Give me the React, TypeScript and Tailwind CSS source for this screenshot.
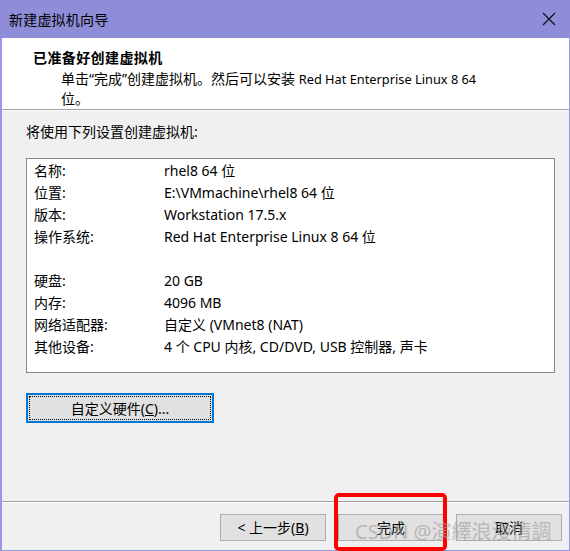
const font = "font-['Noto_Sans','Noto_Sans_CJK_SC',sans-serif]";

const rows: [string, string][] = [
  ["名称:", "rhel8 64 位"],
  ["位置:", "E:\\VMmachine\\rhel8 64 位"],
  ["版本:", "Workstation 17.5.x"],
  ["操作系统:", "Red Hat Enterprise Linux 8 64 位"],
];

const rows2: [string, string][] = [
  ["硬盘:", "20 GB"],
  ["内存:", "4096 MB"],
  ["网络适配器:", "自定义 (VMnet8 (NAT)"],
  ["其他设备:", "4 个 CPU 内核, CD/DVD, USB 控制器, 声卡"],
];

function Row({ label, value }: { label: string; value: string }) {
  return (
    <div className="flex h-[22px] items-center">
      <span className="w-[130px]">{label}</span>
      <span>{value}</span>
    </div>
  );
}

function Btn({ children, className = "" }: { children: React.ReactNode; className?: string }) {
  return (
    <div
      className={
        "flex h-[27px] w-[106px] items-center justify-center border border-[#adadad] bg-[#e1e1e1] text-[14px] text-black " +
        className
      }
    >
      {children}
    </div>
  );
}

export default function App() {
  return (
    <div className={`relative flex h-[551px] w-[570px] flex-col bg-[#f0f0f0] text-[14px] text-black ${font}`}>
      {/* title bar */}
      <div className="flex h-[38px] shrink-0 items-center justify-between bg-[#8f8cd8] pl-[9px] pr-[14px]">
        <span className="text-[14px] tracking-[0.2px]">新建虚拟机向导</span>
        <svg width="14" height="14" viewBox="0 0 14 14">
          <path d="M1 1L13 13M13 1L1 13" stroke="#111" strokeWidth="1.2" />
        </svg>
      </div>

      <div className="flex flex-1 flex-col border-b border-l-2 border-r border-[#9a97e4]">
        {/* header */}
        <div className="h-[72px] shrink-0 border-b border-[#a0a0a0] bg-white pl-[31px] pt-[10px]">
          <div className="text-[14px] font-bold leading-[20px] tracking-[0.4px]">已准备好创建虚拟机</div>
          <div className="mt-[1px] w-[452px] pl-[28px] leading-[19px]">
            单击“完成”创建虚拟机。然后可以安装 <span className="text-[12.8px]">Red Hat Enterprise Linux 8 64</span> 位。
          </div>
        </div>
        <div className="h-px bg-white" />

        {/* body */}
        <div className="flex flex-1 flex-col pl-[24px] pr-[14px]">
          <div className="mt-[12px] leading-[18px]">将使用下列设置创建虚拟机:</div>
          <div className="mt-[17px] h-[215px] border border-[#828790] bg-white pl-[7px]">
            {rows.map(([l, v]) => (
              <Row key={l} label={l} value={v} />
            ))}
            <div className="h-[22px]" />
            {rows2.map(([l, v]) => (
              <Row key={l} label={l} value={v} />
            ))}
          </div>
          <div className="mt-[20px] flex h-[30px] w-[188px] items-center justify-center border-2 border-[#0078d7] bg-[#e1e1e1] outline-1 outline-dotted outline-black -outline-offset-4">
            自定义硬件(<span className="underline">C</span>)...
          </div>
        </div>

        {/* footer */}
        <div className="h-[2px] shrink-0 border-t border-[#a0a0a0] bg-white" />
        <div className="flex h-[47px] shrink-0 items-start gap-[12px] pl-[218px] pt-[11px]">
          <Btn>
            &lt; 上一步(<span className="underline">B</span>)
          </Btn>
          <Btn>完成</Btn>
          <Btn>取消</Btn>
        </div>
      </div>

      {/* annotation + watermark */}
      <div className="absolute left-[334px] top-[493px] h-[58px] w-[113px] rounded-[5px] border-4 border-[#ff0000]" />
      <div className="absolute left-[355px] top-[517px] text-[20px] leading-[30px] text-[#9c9c9c] opacity-60">
        CSDN @演繹浪漫情調
      </div>
    </div>
  );
}
